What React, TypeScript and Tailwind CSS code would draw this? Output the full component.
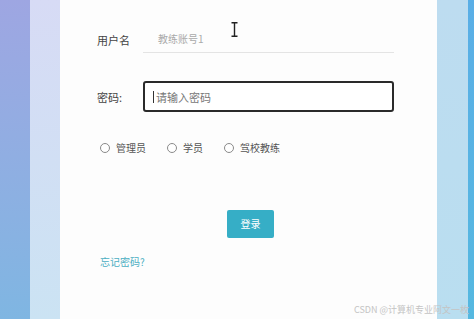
import React from 'react'

const font = { fontFamily: '"Noto Sans CJK SC", "Noto Sans", sans-serif' }

function Radio({ label, className }: { label: string; className?: string }) {
  return (
    <label className={`flex items-center ${className ?? ''}`}>
      <span className="w-[10px] h-[10px] rounded-full border border-[#8a8a8a] bg-white" />
      <span className="ml-[6px] text-[10px] leading-[12px] text-[#555]">{label}</span>
    </label>
  )
}

export default function App() {
  return (
    <div className="relative flex w-[474px] h-[319px] overflow-hidden bg-white" style={font}>
      {/* left strips */}
      <div className="w-[30px] h-full bg-gradient-to-b from-[#9ea6e2] to-[#7fb6e2]" />
      <div className="w-[30px] h-full bg-gradient-to-b from-[#d7dbf5] to-[#cbe3f3]" />

      {/* card */}
      <div className="w-[377px] h-full bg-[#fdfdfd] pl-[37px] pt-[26px] flex flex-col">
        {/* username */}
        <div className="flex items-center h-[27px]">
          <span className="w-[46px] text-[11px] leading-[12px] text-[#444]">用户名</span>
          <div className="w-[251px] h-[27px] border-b border-[#e4e4e4] flex items-center pl-[15px]">
            <span className="text-[10px] leading-[12px] text-[#aaa]">教练账号1</span>
          </div>
        </div>

        {/* password */}
        <div className="flex items-center mt-[28px]">
          <span className="w-[46px] text-[11px] leading-[12px] text-[#444]">密码:</span>
          <div className="w-[251px] h-[31px] border-2 border-[#2a2a2a] rounded-[3px] bg-white flex items-center pl-[8px]">
            <span className="w-px h-[12px] bg-[#333]" />
            <span className="ml-[2px] text-[11px] leading-[12px] text-[#777]">请输入密码</span>
          </div>
        </div>

        {/* roles */}
        <div className="flex items-center mt-[30px] pl-[3px] h-[12px]">
          <Radio label="管理员" />
          <Radio label="学员" className="ml-[21px]" />
          <Radio label="驾校教练" className="ml-[21px]" />
        </div>

        {/* login button */}
        <button className="mt-[56px] ml-[130px] w-[47px] h-[28px] bg-[#36aec6] rounded-[2px] text-white text-[10px] leading-[12px] flex items-center justify-center">
          登录
        </button>

        <a className="mt-[18px] pl-[3px] text-[10px] leading-[12px] text-[#4aaec2]">忘记密码?</a>
      </div>

      {/* right strips */}
      <div className="w-[31px] h-full bg-gradient-to-b from-[#bddcf0] to-[#b9def0]" />
      <div className="w-[6px] h-full bg-gradient-to-b from-[#5aaee6] to-[#55b8e0]" />

      {/* mouse cursor */}
      <svg className="absolute left-[231px] top-[22px]" width="7" height="15" viewBox="0 0 7 15">
        <path d="M0.5 0.8 H6.5 M3.5 0.8 V14.2 M0.5 14.2 H6.5" stroke="#222" strokeWidth="1.4" fill="none" />
      </svg>

      {/* watermark */}
      <span className="absolute right-[5px] top-[304px] text-[9px] leading-[11px] text-[#c4c4c4] whitespace-nowrap">
        CSDN @计算机专业阿文一枚
      </span>
    </div>
  )
}
